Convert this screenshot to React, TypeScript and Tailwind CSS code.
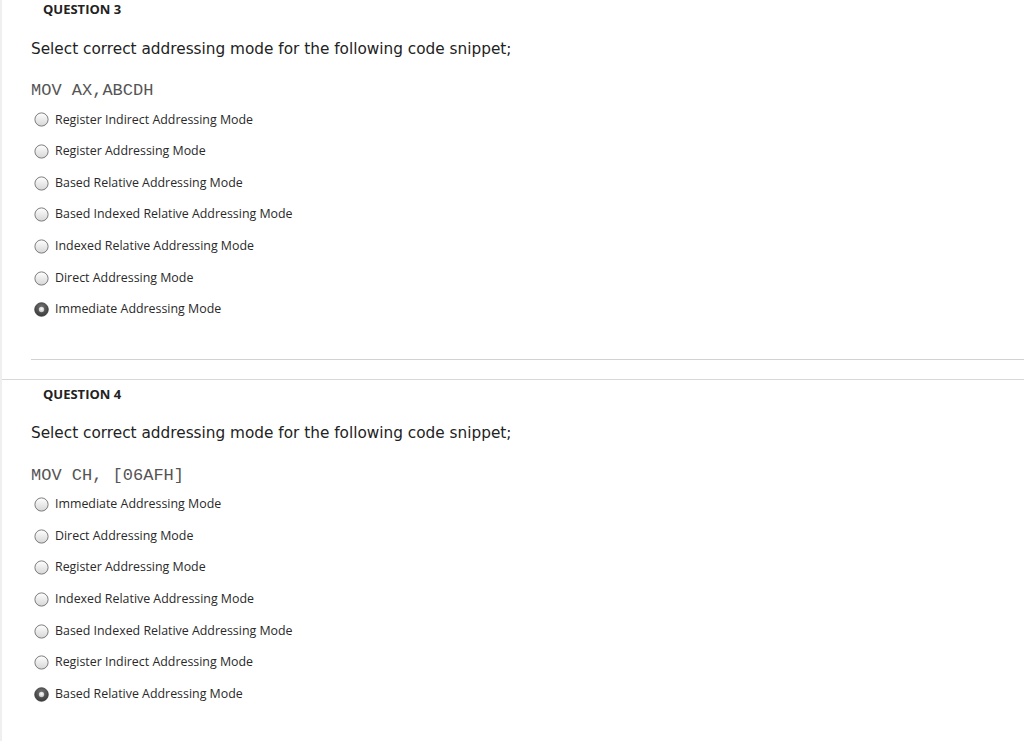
import React from "react";

const Radio = ({ checked }: { checked?: boolean }) =>
  checked ? (
    <svg width="15" height="15" viewBox="0 0 15 15" className="shrink-0">
      <defs>
        <radialGradient id="gsel" cx="50%" cy="30%" r="70%">
          <stop offset="0%" stopColor="#707070" />
          <stop offset="100%" stopColor="#3c3c3c" />
        </radialGradient>
        <radialGradient id="gdot" cx="50%" cy="40%" r="60%">
          <stop offset="0%" stopColor="#ffffff" />
          <stop offset="100%" stopColor="#bdbdbd" />
        </radialGradient>
      </defs>
      <circle cx="7.5" cy="7.5" r="6.8" fill="url(#gsel)" stroke="#3a3a3a" strokeWidth="0.8" />
      <circle cx="7.5" cy="7.5" r="2.7" fill="url(#gdot)" />
    </svg>
  ) : (
    <svg width="15" height="15" viewBox="0 0 15 15" className="shrink-0">
      <defs>
        <linearGradient id="gun" x1="0" y1="0" x2="0" y2="1">
          <stop offset="0%" stopColor="#ffffff" />
          <stop offset="100%" stopColor="#d6d6d6" />
        </linearGradient>
      </defs>
      <circle cx="7.5" cy="7.5" r="6.6" fill="url(#gun)" stroke="#6f6f6f" strokeWidth="0.9" />
    </svg>
  );

type Q = { n: number; code: string; options: string[]; selected: number };

const questions: Q[] = [
  {
    n: 3,
    code: "MOV AX,ABCDH",
    options: [
      "Register Indirect Addressing Mode",
      "Register Addressing Mode",
      "Based Relative Addressing Mode",
      "Based Indexed Relative Addressing Mode",
      "Indexed Relative Addressing Mode",
      "Direct Addressing Mode",
      "Immediate Addressing Mode",
    ],
    selected: 6,
  },
  {
    n: 4,
    code: "MOV CH, [06AFH]",
    options: [
      "Immediate Addressing Mode",
      "Direct Addressing Mode",
      "Register Addressing Mode",
      "Indexed Relative Addressing Mode",
      "Based Indexed Relative Addressing Mode",
      "Register Indirect Addressing Mode",
      "Based Relative Addressing Mode",
    ],
    selected: 6,
  },
];

const Question = ({ q }: { q: Q }) => (
  <div className="flex flex-col pt-px">
    <div className="h-[18px] flex items-center pl-[41px] font-['Open_Sans',sans-serif] font-bold text-[13px] text-[#222]">
      QUESTION {q.n}
    </div>
    <div className="mt-[20px] h-[20px] flex items-center pl-[29px] font-['DejaVu_Sans',Verdana,sans-serif] text-[15.3px] text-[#222]">
      Select correct addressing mode for the following code snippet;
    </div>
    <div className="mt-[22px] h-[20px] flex items-center pl-[29px] font-['Liberation_Mono',monospace] text-[17px] text-[#555] whitespace-pre">
      {q.code}
    </div>
    <div className="mt-[3px] flex flex-col">
      {q.options.map((o, i) => (
        <div key={i} className="h-[31.67px] flex items-center pl-[32px] gap-[6px]">
          <Radio checked={i === q.selected} />
          <span className="font-['Open_Sans',sans-serif] text-[12.4px] text-[#2a2a2a]">{o}</span>
        </div>
      ))}
    </div>
  </div>
);

export default function App() {
  return (
    <div className="w-[1024px] h-[741px] flex bg-white overflow-hidden">
      <div className="w-[2px] bg-[#efefef] shrink-0" />
      <div className="flex-1 flex flex-col">
        <Question q={questions[0]} />
        <div className="mt-[33px] ml-[29px] h-px bg-[#d2d2d2]" />
        <div className="mt-[19px] h-px bg-[#d8d8d8]" />
        <div className="mt-[5px]">
          <Question q={questions[1]} />
        </div>
      </div>
    </div>
  );
}
